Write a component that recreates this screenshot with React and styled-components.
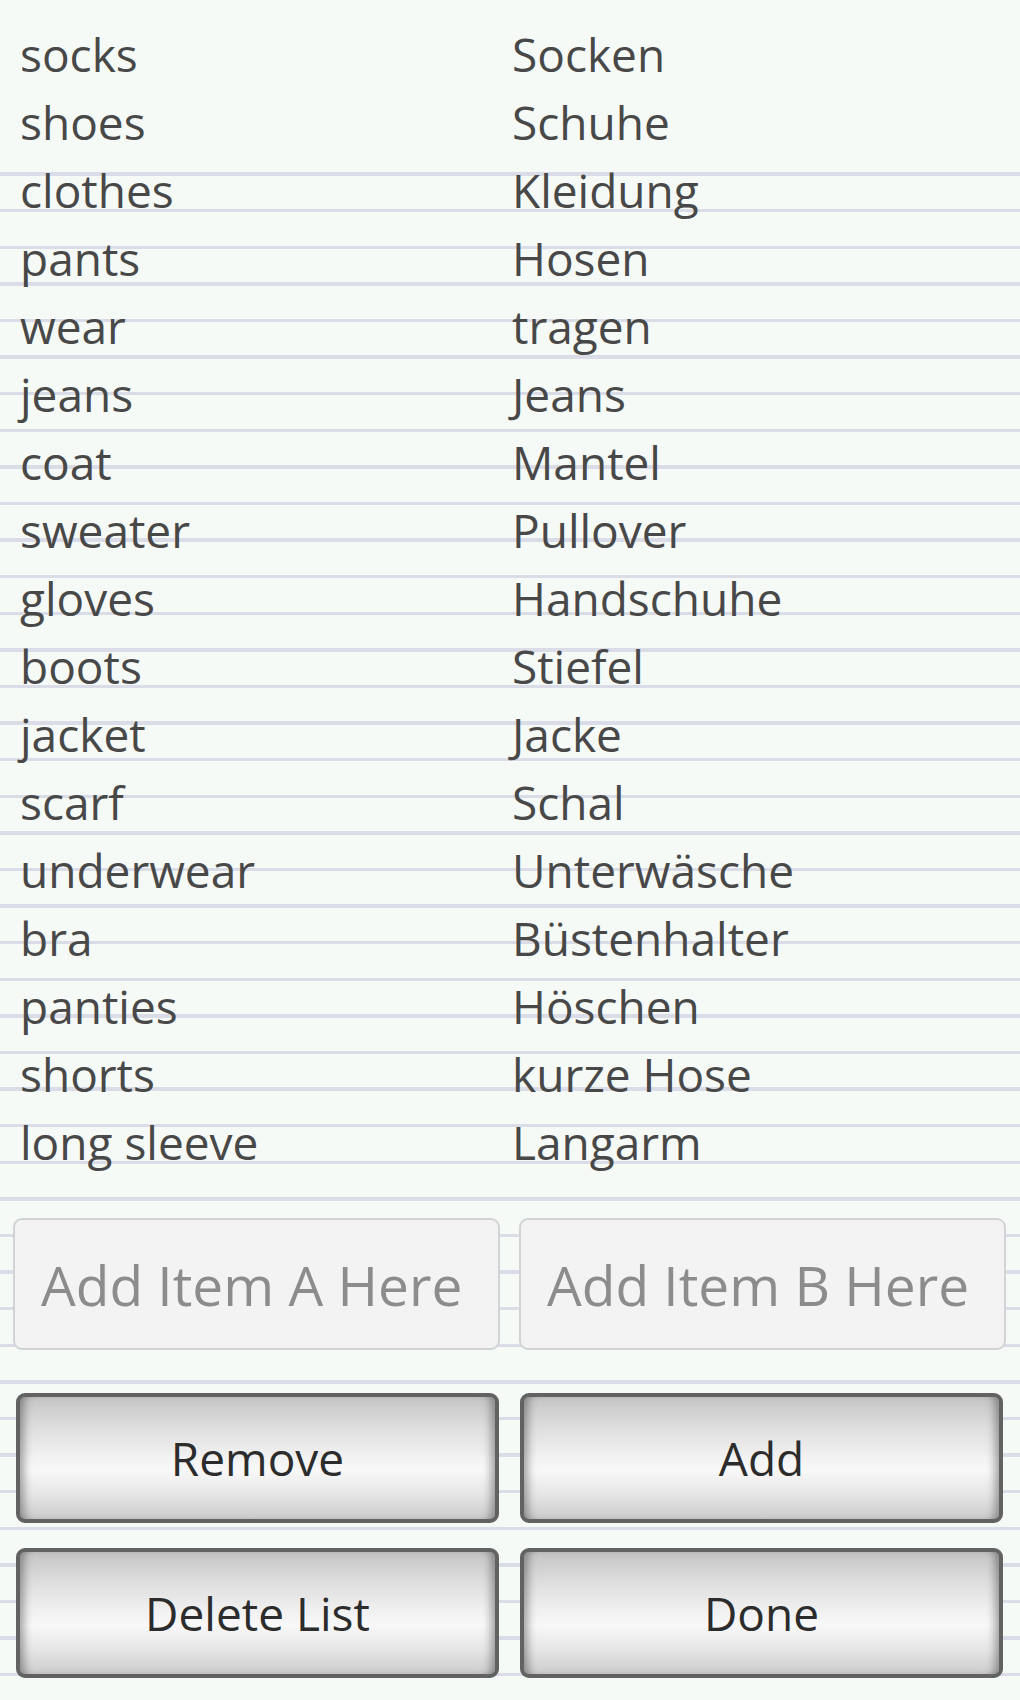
import styled, { createGlobalStyle } from "styled-components";

const words = [
  ["socks", "Socken"],
  ["shoes", "Schuhe"],
  ["clothes", "Kleidung"],
  ["pants", "Hosen"],
  ["wear", "tragen"],
  ["jeans", "Jeans"],
  ["coat", "Mantel"],
  ["sweater", "Pullover"],
  ["gloves", "Handschuhe"],
  ["boots", "Stiefel"],
  ["jacket", "Jacke"],
  ["scarf", "Schal"],
  ["underwear", "Unterwäsche"],
  ["bra", "Büstenhalter"],
  ["panties", "Höschen"],
  ["shorts", "kurze Hose"],
  ["long sleeve", "Langarm"],
];

const GlobalStyle = createGlobalStyle`
  html, body {
    margin: 0;
    padding: 0;
    background: #f6faf7;
  }
  * {
    box-sizing: border-box;
  }
`;

const Page = styled.div`
  width: 1020px;
  min-height: 1700px;
  font-family: "Open Sans", "DejaVu Sans", sans-serif;
  background-color: #f6faf7;
  background-image: linear-gradient(#f6faf7, #f6faf7),
    repeating-linear-gradient(
      to bottom,
      transparent 0,
      transparent 26px,
      #dadce7 26px,
      #dadce7 29.5px,
      transparent 29.5px,
      transparent 36.6px
    );
  background-size: 100% 166px, 100% 100%;
  background-repeat: no-repeat, repeat;
`;

const List = styled.div`
  height: 1194px;
  overflow: hidden;
  padding: 20px 0 0 20px;
`;

const Row = styled.div`
  display: grid;
  grid-template-columns: 492px 1fr;
  align-items: center;
  height: 68px;
  font-size: 46px;
  line-height: 1;
  color: #484848;
`;

const Cell = styled.span`
  white-space: nowrap;
`;

const Fields = styled.div`
  display: grid;
  grid-template-columns: 1fr 1fr;
  gap: 19px;
  padding: 24px 14px 0 13px;
`;

const Field = styled.input`
  height: 132px;
  width: 100%;
  border: 2px solid #d3d3d6;
  border-radius: 9px;
  background: #f3f3f3;
  padding: 0 0 0 26px;
  font-family: "Open Sans", "DejaVu Sans", sans-serif;
  font-size: 55px;
  color: #333;
  outline: none;
  &::placeholder {
    color: #8c8c8c;
  }
`;

const Buttons = styled.div`
  display: grid;
  grid-template-columns: 1fr 1fr;
  column-gap: 21px;
  row-gap: 25px;
  padding: 43px 17px 0 16px;
`;

const Button = styled.button`
  height: 130px;
  border: 4px solid #626262;
  border-radius: 9px;
  font-family: "Open Sans", "DejaVu Sans", sans-serif;
  font-size: 46px;
  color: #2c2c2c;
  background: linear-gradient(
    to bottom,
    #c4c4c4 0%,
    #dedede 25%,
    #f2f2f2 50%,
    #f8f8f8 60%,
    #e6e6e6 80%,
    #cbcbcb 100%
  );
  box-shadow: inset 10px 0 8px -6px rgba(0, 0, 0, 0.35),
    inset -10px 0 8px -6px rgba(0, 0, 0, 0.35);
  cursor: pointer;
`;

const App = () => {
  return (
    <Page>
      <GlobalStyle />
      <List>
        {words.map(([a, b]) => (
          <Row key={a}>
            <Cell>{a}</Cell>
            <Cell>{b}</Cell>
          </Row>
        ))}
      </List>
      <Fields>
        <Field placeholder="Add Item A Here" />
        <Field placeholder="Add Item B Here" />
      </Fields>
      <Buttons>
        <Button>Remove</Button>
        <Button>Add</Button>
        <Button>Delete List</Button>
        <Button>Done</Button>
      </Buttons>
    </Page>
  );
};

export default App;
